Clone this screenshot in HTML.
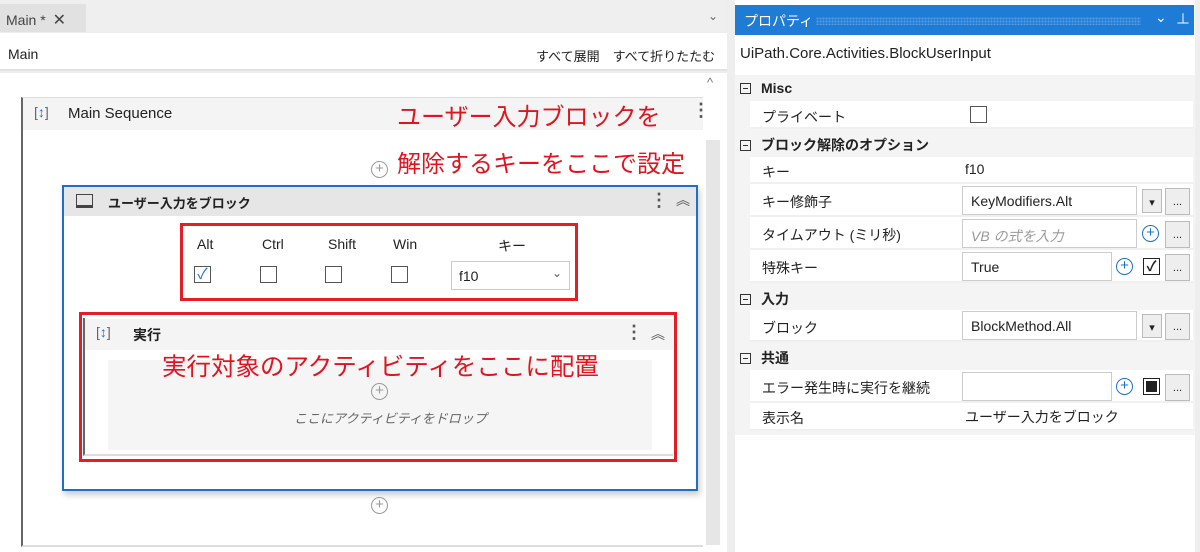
<!DOCTYPE html>
<html><head><meta charset="utf-8"><style>
*{box-sizing:border-box;margin:0;padding:0}
body{width:1200px;height:552px;overflow:hidden;background:#eeeeee;font-family:"Liberation Sans","Noto Sans CJK JP",sans-serif;font-size:14px;color:#222;position:relative}
.a{position:absolute;white-space:nowrap}
.red{color:#e0141e;font-size:24px;white-space:nowrap}
.rb{border:3px solid #e41e26}
.cb{width:17px;height:17px;border:1px solid #555;background:#fff}
.plus{width:17px;height:17px;border:1.5px solid #999;border-radius:50%;color:#999;font-size:15px;line-height:13px;text-align:center}
.row{position:absolute;left:750px;width:443px;background:#fff;border-bottom:2px solid #f0f0f0}
.lbl{position:absolute;left:12px;font-size:14px;white-space:nowrap}
.sec{position:absolute;left:740px;font-weight:bold;font-size:14px;white-space:nowrap}
.sec b{display:inline-block;width:11px;height:11px;border:1px solid #333;margin-right:10px;position:relative;top:1px}
.sec b:after{content:"";position:absolute;left:2px;top:4px;width:5px;height:1px;background:#333}
.val{position:absolute;background:#fff;border:1px solid #ccc;font-size:14px;padding:6px 8px;white-space:nowrap}
.btn{position:absolute;width:20px;height:24px;border:1px solid #bbb;background:#eee;font-size:11px;text-align:center;line-height:26px}
</style></head><body>
<div class="a" style="left:0;top:0;width:727px;height:32px;background:#efefef"></div>
<div class="a" style="left:0;top:4px;width:86px;height:28px;background:#e1e1e1;font-size:14px;padding:6px 0 0 6px;color:#444">Main * <span style="font-size:16px;margin-left:3px">✕</span></div>
<div class="a" style="left:708px;top:9px;color:#666;font-size:12px">⌄</div>
<div class="a" style="left:0;top:33px;width:727px;height:38px;background:#fff;border-bottom:2px solid #e3e3e3"></div>
<div class="a" style="left:8px;top:46px">Main</div>
<div class="a" style="left:536px;top:46px;font-size:13px">すべて展開　すべて折りたたむ</div>
<div class="a" style="left:0;top:73px;width:727px;height:479px;background:#fff"></div>
<div class="a" style="left:706px;top:140px;width:14px;height:405px;background:#e6e6e6"></div>
<div class="a" style="left:707px;top:75px;color:#777;font-size:13px">^</div>
<div class="a" style="left:21px;top:97px;width:682px;height:450px;border-left:2px solid #666;border-top:1px solid #ddd;border-bottom:2px solid #ddd"></div>
<div class="a" style="left:23px;top:98px;width:680px;height:32px;background:#f4f4f4"></div>
<div class="a" style="left:34px;top:104px;font-size:14px;color:#666">[<span style="color:#1e6fc7">↕</span>]</div>
<div class="a" style="left:68px;top:105px;font-size:15px">Main Sequence</div>
<div class="a" style="left:692px;top:100px;font-size:18px;color:#555;font-weight:bold">⋮</div>
<div class="a red" style="left:397px;top:97px">ユーザー入力ブロックを</div>
<div class="a red" style="left:397px;top:144px">解除するキーをここで設定</div>
<div class="a plus" style="left:371px;top:161px">+</div>
<div class="a red" style="left:448px;top:190px;font-size:18px">↓</div>
<div class="a" style="left:62px;top:185px;width:636px;height:306px;border:2px solid #1e6fc7;background:#fff;box-shadow:2px 4px 6px rgba(0,0,0,.2)"></div>
<div class="a" style="left:64px;top:187px;width:632px;height:29px;background:#e6e6e6"></div>
<div class="a" style="left:76px;top:194px;width:17px;height:14px;border:1.5px solid #444;border-bottom-width:3px"></div>
<div class="a" style="left:108px;top:193px;font-size:13px;font-weight:bold">ユーザー入力をブロック</div>
<div class="a" style="left:650px;top:190px;font-size:18px;color:#555;font-weight:bold">⋮</div>
<div class="a" style="left:676px;top:190px;font-size:14px;color:#555">︽</div>
<div class="a rb" style="left:180px;top:223px;width:398px;height:78px"></div>
<div class="a" style="left:197px;top:236px">Alt</div><div class="a" style="left:262px;top:236px">Ctrl</div><div class="a" style="left:328px;top:236px">Shift</div><div class="a" style="left:393px;top:236px">Win</div><div class="a" style="left:498px;top:236px">キー</div>
<div class="a cb" style="left:194px;top:266px;color:#1e6fc7;font-size:15px;line-height:15px;text-align:center">✓</div>
<div class="a cb" style="left:260px;top:266px"></div><div class="a cb" style="left:325px;top:266px"></div><div class="a cb" style="left:391px;top:266px"></div>
<div class="a" style="left:451px;top:261px;width:119px;height:29px;border:1px solid #ccc;padding:6px 7px">f10<span style="position:absolute;right:7px;top:4px;color:#555;font-size:12px">⌄</span></div>
<div class="a rb" style="left:79px;top:312px;width:598px;height:150px"></div>
<div class="a" style="left:83px;top:318px;width:590px;height:138px;border-left:2px solid #666;border-bottom:2px solid #ddd;background:#fff"></div>
<div class="a" style="left:85px;top:319px;width:588px;height:31px;background:#f4f4f4"></div>
<div class="a" style="left:96px;top:324px;font-size:14px;color:#666">[<span style="color:#1e6fc7">↕</span>]</div>
<div class="a" style="left:133px;top:325px;font-size:14px;font-weight:bold">実行</div>
<div class="a" style="left:625px;top:322px;font-size:18px;color:#555;font-weight:bold">⋮</div>
<div class="a" style="left:651px;top:324px;font-size:14px;color:#555">︽</div>
<div class="a" style="left:108px;top:360px;width:544px;height:90px;background:#f5f5f5"></div>
<div class="a red" style="left:162px;top:348px;font-size:24.5px">実行対象のアクティビティをここに配置</div>
<div class="a plus" style="left:371px;top:383px">+</div>
<div class="a" style="left:294px;top:408px;font-size:13px;font-style:italic;color:#666">ここにアクティビティをドロップ</div>
<div class="a plus" style="left:371px;top:497px">+</div>
<div class="a" style="left:735px;top:0;width:460px;height:552px;background:#fff"></div>
<div class="a" style="left:735px;top:5px;width:459px;height:30px;background:#1e7bd6;color:#fff;font-size:14px;padding:6px 0 0 9px">プロパティ<span style="position:absolute;left:81px;top:12px;width:325px;height:8px;background-image:radial-gradient(#5b9ee3 1px,transparent 1.2px);background-size:3px 3px"></span><span style="position:absolute;left:420px;top:4px">⌄</span><span style="position:absolute;left:441px;top:4px">⊥</span></div>
<div class="a" style="left:740px;top:45px;font-size:15px">UiPath.Core.Activities.BlockUserInput</div>
<div class="a" style="left:735px;top:75px;width:460px;height:360px;background:#f4f4f4"></div>
<div class="sec" style="top:80px"><b></b>Misc</div>
<div class="row" style="top:101px;height:28px"><span class="lbl" style="top:6px">プライベート</span><span class="cb a" style="left:220px;top:5px"></span></div>
<div class="sec" style="top:135px"><b></b>ブロック解除のオプション</div>
<div class="row" style="top:157px;height:27px"><span class="lbl" style="top:5px">キー</span><span class="a" style="left:215px;top:4px">f10</span></div>
<div class="row" style="top:184px;height:33px"><span class="lbl" style="top:8px">キー修飾子</span></div>
<div class="val" style="left:962px;top:186px;width:175px;height:29px">KeyModifiers.Alt</div>
<div class="row" style="top:217px;height:33px"><span class="lbl" style="top:8px">タイムアウト (ミリ秒)</span></div>
<div class="val" style="left:962px;top:219px;width:175px;height:29px;color:#999;font-style:italic">VB の式を入力</div>
<div class="row" style="top:250px;height:33px"><span class="lbl" style="top:8px">特殊キー</span></div>
<div class="val" style="left:962px;top:252px;width:150px;height:29px">True</div>
<div class="sec" style="top:289px"><b></b>入力</div>
<div class="row" style="top:310px;height:32px"><span class="lbl" style="top:8px">ブロック</span></div>
<div class="val" style="left:962px;top:311px;width:175px;height:29px">BlockMethod.All</div>
<div class="sec" style="top:348px"><b></b>共通</div>
<div class="row" style="top:370px;height:33px"><span class="lbl" style="top:8px">エラー発生時に実行を継続</span></div>
<div class="val" style="left:962px;top:372px;width:150px;height:29px"></div>
<div class="row" style="top:403px;height:28px"><span class="lbl" style="top:5px">表示名</span><span class="a" style="left:215px;top:4px">ユーザー入力をブロック</span></div>
<div class="btn" style="left:1142px;top:189px">▾</div><div class="btn" style="left:1165px;top:188px;width:25px;height:27px">...</div>
<div class="btn" style="left:1165px;top:221px;width:25px;height:27px">...</div>
<div class="btn" style="left:1142px;top:314px">▾</div><div class="btn" style="left:1165px;top:313px;width:25px;height:27px">...</div>
<div class="btn" style="left:1165px;top:254px;width:25px;height:27px">...</div>
<div class="btn" style="left:1165px;top:374px;width:25px;height:27px">...</div>
<div class="a plus" style="left:1142px;top:225px;border-color:#1e6fc7;color:#1e6fc7">+</div>
<div class="a plus" style="left:1116px;top:258px;border-color:#1e6fc7;color:#1e6fc7">+</div>
<div class="a plus" style="left:1116px;top:378px;border-color:#1e6fc7;color:#1e6fc7">+</div>
<div class="a cb" style="left:1143px;top:258px;border-color:#222;font-size:14px;line-height:15px;text-align:center;font-weight:bold">✓</div>
<div class="a cb" style="left:1143px;top:378px;border-color:#222;padding:2px"><div style="width:11px;height:11px;background:#222"></div></div>
</body></html>
